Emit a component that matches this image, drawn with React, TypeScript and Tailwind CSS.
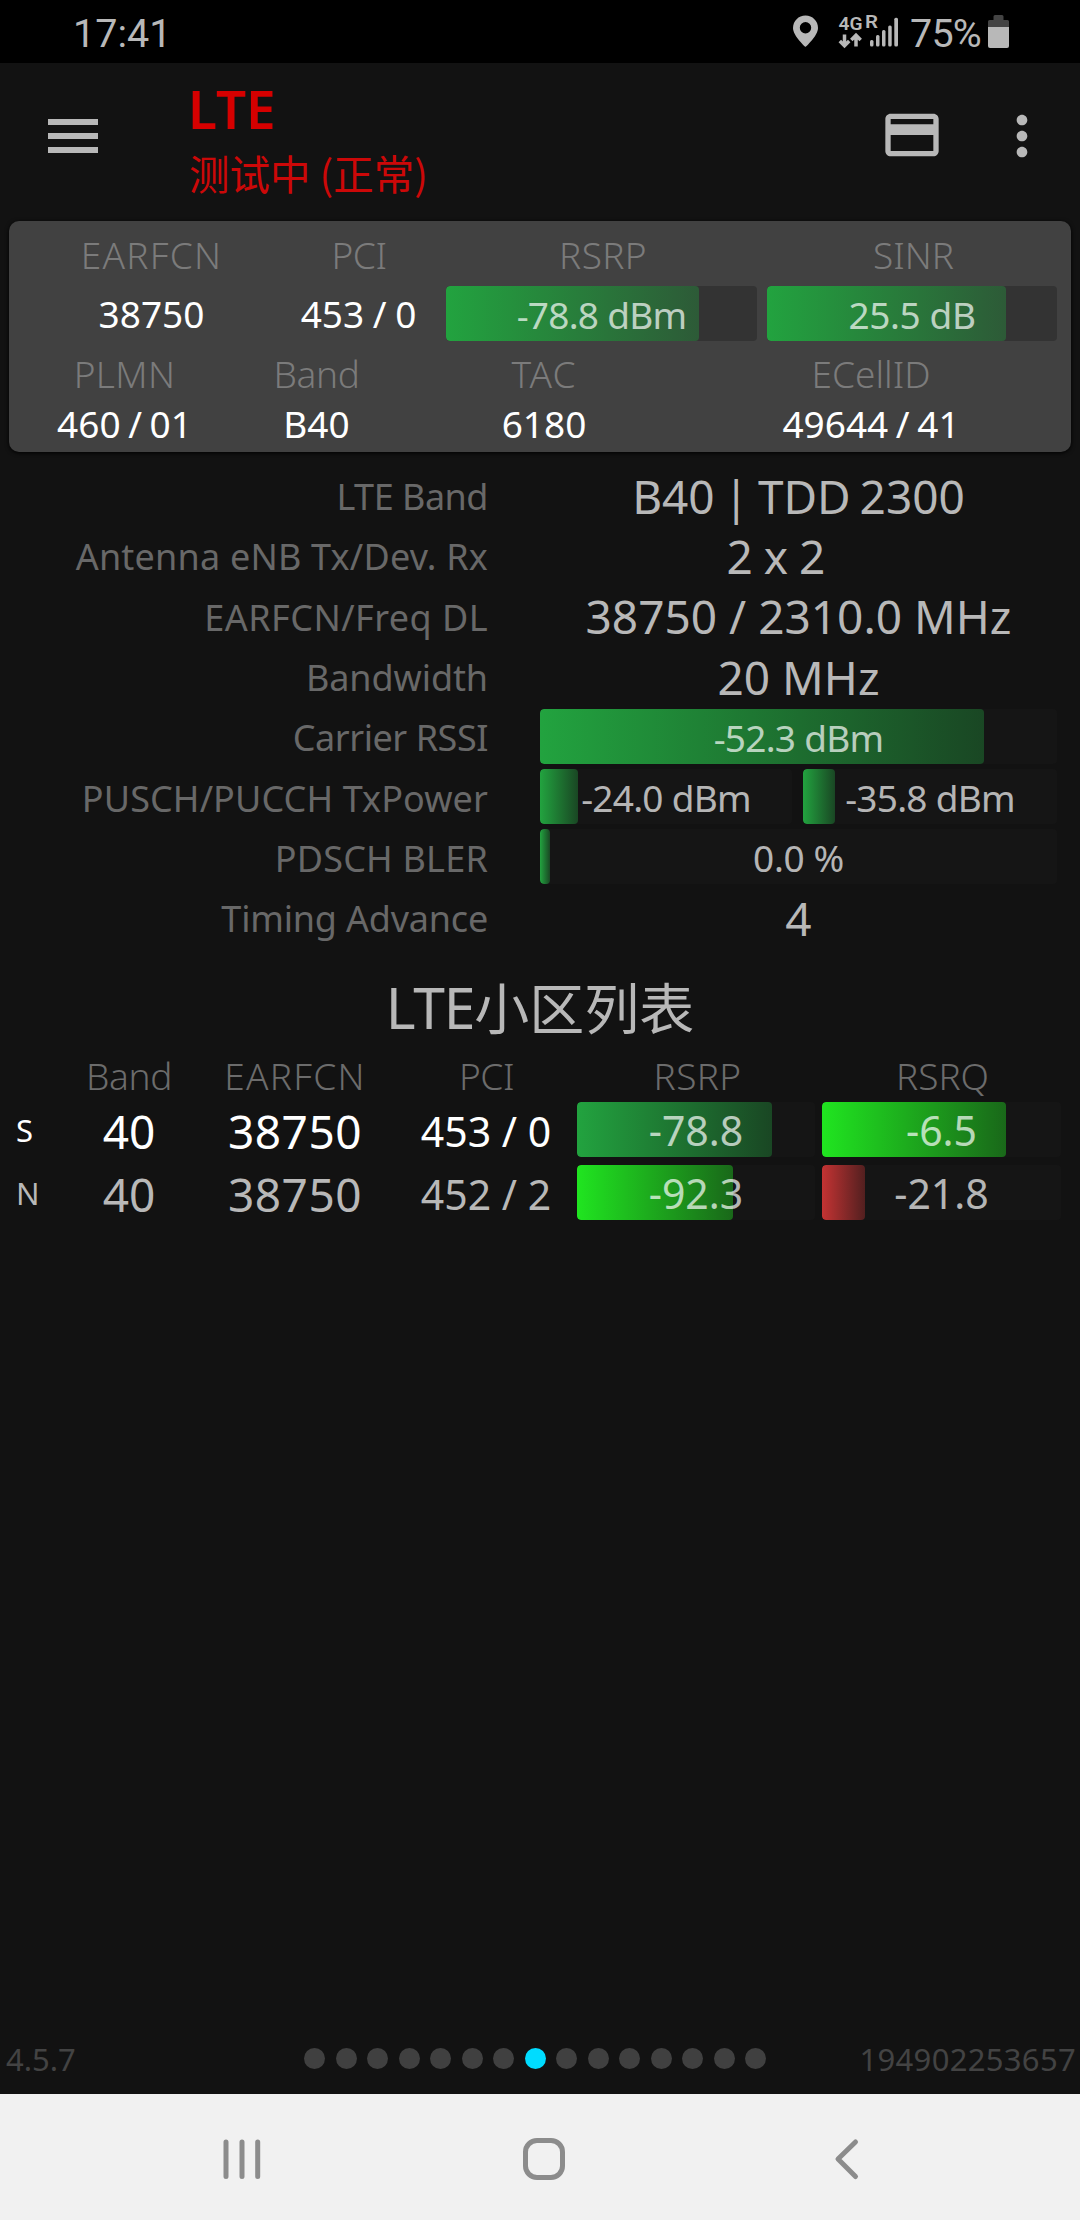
import { ReactNode } from "react";
import cx from "clsx";
import { MdMoreVert, MdOutlineCreditCard } from "react-icons/md";

const fills = {
  green: "bg-linear-to-r from-[#22a33f] to-[#22a33f]/35",
  lime: "bg-linear-to-r from-[#20e520] to-[#20e520]/40",
  red: "bg-linear-to-r from-[#c43333] to-[#c43333]/35",
};

interface MeterProps {
  value: string;
  fill: number; // filled width in px
  color?: keyof typeof fills;
  className?: string;
}

function Meter({ value, fill, color = "green", className }: MeterProps) {
  return (
    <div
      className={cx(
        "relative flex h-[55px] items-center justify-center overflow-hidden rounded-[4px]",
        className,
      )}
    >
      <div
        className={cx("absolute inset-y-0 left-0 rounded-[4px]", fills[color])}
        style={{ width: fill }}
      />
      <span className="relative pt-0.5 whitespace-pre text-white/70">
        {value}
      </span>
    </div>
  );
}

function StatusBar() {
  return (
    <div className="flex h-[63px] items-center bg-black pr-[71px] pl-[73px] font-[Roboto,sans-serif] text-[39.5px] text-[#b8b8b8]">
      <span className="pt-1">17:41</span>
      <svg className="ml-auto" width="105" height="63" viewBox="792 0 105 63">
        <g fill="#b8b8b8">
          <path
            fillRule="evenodd"
            d="M804.500 15.500c-7 0-12.500 5.500-12.500 12.500 0 8 12.500 19 12.500 19s12.500-11 12.500-19c0-7-5.500-12.500-12.500-12.500zm0 6.500a5.700 5.700 0 1 1 0 11.400 5.700 5.700 0 0 1 0-11.400z"
          />
          <text x="837.500" y="29.500" fontSize="19" fontWeight="600" textLength="24" lengthAdjust="spacingAndGlyphs">
            4G
          </text>
          <text x="864" y="28" fontSize="19" fontWeight="600" textLength="13" lengthAdjust="spacingAndGlyphs">
            R
          </text>
          <rect x="869" y="40" width="3.500" height="6.500" rx="1.500" />
          <rect x="875" y="35" width="3.500" height="11.500" rx="1.500" />
          <rect x="881" y="30" width="3.500" height="16.500" rx="1.500" />
          <rect x="887.200" y="25.500" width="3.500" height="21" rx="1.500" />
          <rect x="893.300" y="17.700" width="3.700" height="28.800" rx="1.500" />
        </g>
        <g fill="none" stroke="#b8b8b8" strokeWidth="3.500">
          <path d="M843.500 34.500v11M838.800 41l4.700 4.700 4.700-4.700" />
          <path d="M855 46.500V36M850.300 40l4.700-4.700 4.700 4.700" />
        </g>
      </svg>
      <span className="w-[90px] pt-1 pl-3 tracking-[-0.02em]">75%</span>
      <svg width="21" height="63" viewBox="0 0 21 63">
        <path d="M5.500 20v-3.500q0-1.500 1.500-1.500h7q1.500 0 1.500 1.500V20h4q1.500 0 1.500 1.500V28H0v-6.500Q0 20 1.500 20z" fill="#444" />
        <path d="M0 27h21v19q0 2-2 2H2q-2 0-2-2z" fill="#b8b8b8" />
      </svg>
    </div>
  );
}

function Header() {
  return (
    <header className="flex h-[158px] text-[#b8b8b8]">
      <div className="flex w-[191px] flex-col gap-2 pt-14 pl-12">
        <div className="h-1.5 w-[50px] bg-current" />
        <div className="h-1.5 w-[50px] bg-current" />
        <div className="h-1.5 w-[50px] bg-current" />
      </div>
      <div className="flex-1">
        <div className="mt-[15px] ml-[-3px] h-[62px] text-[53px] leading-[62px] font-semibold text-[#d60000]">
          LTE
        </div>
        <div className="ml-[-2px] font-['Noto_Sans_CJK_SC',sans-serif] text-[40.5px] leading-[65px] text-[#cc0808]">
          测试中 (正常)
        </div>
      </div>
      <MdOutlineCreditCard className="mt-[40px] mr-[46px]" size={64} />
      <MdMoreVert className="mt-[41px] mr-[26px]" size={64} />
    </header>
  );
}

function Label({ className, children }: { className: string; children: ReactNode }) {
  return (
    <div className={cx("text-center font-light", className)}>{children}</div>
  );
}

function Summary() {
  return (
    <section className="mx-[9px] h-[231px] rounded-[10px] bg-[#414141] text-center text-[37px] leading-[54px] text-white shadow-[0_1px_4px_#000]">
      <div className="flex h-[65px] pt-[7px] pl-[23px] text-[#7b7b7b]">
        <Label className="w-[239px] tracking-[0.035em]">EARFCN</Label>
        <Label className="w-[176px] tracking-[-0.01em]">PCI</Label>
        <Label className="w-[312px] tracking-[0.01em]">RSRP</Label>
        <Label className="w-[309px]">SINR</Label>
      </div>
      <div className="flex h-[55px] items-center pl-[23px]">
        <div className="w-[239px] pt-px">38750</div>
        <div className="w-[175px] pt-px [word-spacing:-1px]">453 / 0</div>
        <Meter className="w-[311px] bg-[#333] tracking-[-0.02em]" value="-78.8 dBm" fill={253} />
        <Meter className="ml-2.5 w-[290px] bg-[#333] tracking-[-0.01em]" value="25.5 dB" fill={239} />
      </div>
      <div className="flex h-[55px] pt-[6px] text-[#7b7b7b]">
        <Label className="w-[231px] tracking-[0.01em]">PLMN</Label>
        <Label className="w-[153px] tracking-[-0.01em]">Band</Label>
        <Label className="w-[302px] tracking-[0.03em]">TAC</Label>
        <Label className="w-[352px]">ECellID</Label>
      </div>
      <div className="flex pt-px">
        <div className="w-[231px] [word-spacing:-2px]">460 / 01</div>
        <div className="w-[153px]">B40</div>
        <div className="w-[302px]">6180</div>
        <div className="w-[352px] [word-spacing:-2px]">49644 / 41</div>
      </div>
    </section>
  );
}

interface DetailProps {
  label: string;
  tracking?: string;
  children: ReactNode;
}

function Detail({ label, tracking, children }: DetailProps) {
  return (
    <div className="flex h-[60.300px] items-center">
      <div
        className={cx(
          "w-[488px] pt-[3px] text-right text-[36px] whitespace-nowrap text-[#686868]",
          tracking,
        )}
      >
        {label}
      </div>
      <div className="ml-[52px] flex w-[517px] justify-center text-[46px] whitespace-pre text-[#b8b8b8]">
        {children}
      </div>
    </div>
  );
}

function Details() {
  return (
    <section className="mt-[13px] leading-[57px]">
      <Detail label="LTE Band" tracking="tracking-[-0.5px]">
        <span className="pt-0.5 [word-spacing:-3px]">B40 | TDD 2300</span>
      </Detail>
      <Detail label="Antenna eNB Tx/Dev. Rx" tracking="tracking-[0.2px]">
        <span className="pt-0.5 pr-[45px] [word-spacing:-1px]">2 x 2</span>
      </Detail>
      <Detail label="EARFCN/Freq DL" tracking="tracking-[0.45px]">
        <span className="pt-0.5">38750 / 2310.0 MHz</span>
      </Detail>
      <Detail label="Bandwidth" tracking="tracking-[-0.1px]">
        <span className="pt-0.5">20 MHz</span>
      </Detail>
      <Detail label="Carrier RSSI" tracking="tracking-[-0.45px]">
        <Meter className="w-full bg-[#151515] text-[37px] tracking-[-0.02em]" value="-52.3 dBm" fill={444} />
      </Detail>
      <Detail label="PUSCH/PUCCH TxPower" tracking="tracking-[0.1px]">
        <Meter className="w-[252px] bg-[#151515] text-[37px] tracking-[-0.02em]" value="-24.0 dBm" fill={38} />
        <Meter className="ml-[11px] w-[254px] bg-[#151515] text-[37px] tracking-[-0.02em]" value="-35.8 dBm" fill={32} />
      </Detail>
      <Detail label="PDSCH BLER" tracking="tracking-[0.2px]">
        <Meter className="w-full bg-[#151515] text-[37px] tracking-[-0.01em]" value="0.0 %" fill={10} />
      </Detail>
      <Detail label="Timing Advance" tracking="tracking-[-0.2px]">
        <span className="pt-0.5">4</span>
      </Detail>
    </section>
  );
}

interface Cell {
  kind: string;
  band: string;
  earfcn: string;
  pci: string;
  rsrp: MeterProps;
  rsrq: MeterProps;
}

const cells: Cell[] = [
  {
    kind: "S",
    band: "40",
    earfcn: "38750",
    pci: "453 / 0",
    rsrp: { value: "-78.8", fill: 195 },
    rsrq: { value: "-6.5", fill: 184, color: "lime" },
  },
  {
    kind: "N",
    band: "40",
    earfcn: "38750",
    pci: "452 / 2",
    rsrp: { value: "-92.3", fill: 156, color: "lime" },
    rsrq: { value: "-21.8", fill: 43, color: "red" },
  },
];

function CellList() {
  return (
    <section className="pt-[16px]">
      <h2 className="h-[88px] text-center text-[55px] leading-[88px] text-[#b8b8b8]">
        <span className="text-[57px] tracking-[-0.02em]">LTE</span>
        小区列表
      </h2>
      <div className="flex h-[48px] pl-[62px] text-[37px] leading-[50px] text-[#6c6c6c]">
        <Label className="w-[134px] tracking-[-0.01em]">Band</Label>
        <Label className="w-[198px] tracking-[0.035em]">EARFCN</Label>
        <Label className="w-[185px] tracking-[-0.01em]">PCI</Label>
        <Label className="w-[237px] tracking-[0.01em]">RSRP</Label>
        <Label className="w-[253px]">RSRQ</Label>
      </div>
      <div className="mt-[3px] flex flex-col gap-2">
        {cells.map((cell) => (
          <div
            key={cell.kind}
            className={cx(
              "flex h-[55px] items-center text-center leading-[55px]",
              cell.kind === "S" ? "text-white" : "text-[#b8b8b8]",
            )}
          >
            <div className="w-[62px] pt-0.5 pl-4 text-left text-[31px]">{cell.kind}</div>
            <div className="w-[134px] pt-[3px] text-[46px]">{cell.band}</div>
            <div className="w-[198px] pt-[3px] text-[46px] tracking-[0.01em]">{cell.earfcn}</div>
            <div className="w-[183px] pt-[3px] pl-px text-[41px]">{cell.pci}</div>
            <Meter className="w-[238px] bg-[#151515] text-[41px]" {...cell.rsrp} />
            <Meter className="ml-[7px] w-[239px] bg-[#151515] text-[41px]" {...cell.rsrq} />
          </div>
        ))}
      </div>
    </section>
  );
}

function Footer() {
  return (
    <footer className="mt-auto flex h-[71px] items-center justify-between pr-1 pl-1.5 text-[31px] text-[#434343]">
      <span className="w-[210px] pt-0.5">4.5.7</span>
      <div className="flex gap-[10.500px]">
        {Array.from({ length: 15 }, (_, i) => (
          <div
            key={i}
            className={cx("size-[21px] rounded-full", i === 7 ? "bg-[#00dcff]" : "bg-[#404040]")}
          />
        ))}
      </div>
      <span className="w-[222px] pt-0.5 text-right tracking-[0.01em]">194902253657</span>
    </footer>
  );
}

function NavBar() {
  return (
    <nav className="h-[126px] bg-[#f1f1f1]">
      <svg width="1080" height="126" viewBox="0 2094 1080 126" fill="none" stroke="#8c8c8c" strokeWidth="5" strokeLinecap="round" strokeLinejoin="round">
        <path d="M226 2142v34.500M242 2142v34.500M257.700 2142v34.500" />
        <rect x="525.500" y="2140.500" width="37" height="37" rx="11.500" />
        <path d="M855.500 2142L838 2159L855.500 2176.500" />
      </svg>
    </nav>
  );
}

export default function App() {
  return (
    <div className="flex h-[2220px] w-[1080px] flex-col bg-[#121212] font-['Noto_Sans','Noto_Sans_CJK_SC',sans-serif]">
      <StatusBar />
      <Header />
      <Summary />
      <Details />
      <CellList />
      <Footer />
      <NavBar />
    </div>
  );
}
